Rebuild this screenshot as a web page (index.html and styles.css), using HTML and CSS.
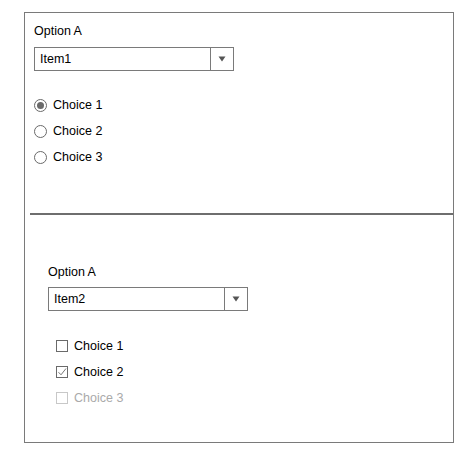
FILE: index.html
```html
<!DOCTYPE html>
<html>
<head>
<meta charset="utf-8">
<link rel="stylesheet" href="styles.css">
</head>
<body>
<div class="panel">
  <div class="section top">
    <div class="label">Option A</div>
    <div class="select">
      <span class="value">Item1</span>
      <span class="arrow"><svg width="8" height="6" viewBox="0 0 8 6"><path d="M0.5 0.5 L7.5 0.5 L4 5.5 Z" fill="#555"/></svg></span>
    </div>
    <div class="choices">
      <div class="row"><span class="radio checked"></span><span>Choice 1</span></div>
      <div class="row"><span class="radio"></span><span>Choice 2</span></div>
      <div class="row"><span class="radio"></span><span>Choice 3</span></div>
    </div>
  </div>
  <div class="divider"></div>
  <div class="section bottom">
    <div class="label">Option A</div>
    <div class="select">
      <span class="value">Item2</span>
      <span class="arrow"><svg width="8" height="6" viewBox="0 0 8 6"><path d="M0.5 0.5 L7.5 0.5 L4 5.5 Z" fill="#555"/></svg></span>
    </div>
    <div class="choices checks">
      <div class="row"><span class="box"></span><span>Choice 1</span></div>
      <div class="row"><span class="box"><svg width="12" height="12" viewBox="0 0 12 12"><path d="M2.5 6.2 L5 8.8 L10 2.5" fill="none" stroke="#777" stroke-width="1"/></svg></span><span>Choice 2</span></div>
      <div class="row disabled"><span class="box"></span><span>Choice 3</span></div>
    </div>
  </div>
</div>
</body>
</html>
```
FILE: styles.css
```css
html, body {
  margin: 0;
  padding: 0;
  background: #fff;
}
body {
  font-family: "Liberation Sans", Arial, sans-serif;
  font-size: 12.5px;
  line-height: 14px;
  color: #000;
}
.panel {
  box-sizing: border-box;
  width: 430px;
  margin: 12px 0 0 24px;
  border: 1px solid #7a7a7a;
}
.section.top {
  padding: 11px 9px 43px 9px;
}
.section.bottom {
  padding: 50px 9px 31px 23px;
}
.label {
  height: 14px;
}
.select {
  box-sizing: border-box;
  width: 200px;
  height: 24px;
  margin-top: 9px;
  border: 1px solid #7a7a7a;
  display: flex;
  align-items: stretch;
}
.section.bottom .select {
  margin-top: 8px;
}
.value {
  flex: 1;
  display: flex;
  align-items: center;
  padding-left: 5px;
}
.arrow {
  width: 22px;
  border-left: 1px solid #7a7a7a;
  display: flex;
  align-items: center;
  justify-content: center;
}
.arrow svg {
  display: block;
}
.choices {
  margin-top: 21px;
  display: flex;
  flex-direction: column;
}
.choices.checks {
  margin-top: 22px;
  padding-left: 8px;
}
.row {
  height: 26px;
  display: flex;
  align-items: center;
  gap: 6px;
}
.radio {
  box-sizing: border-box;
  width: 13px;
  height: 13px;
  border: 1px solid #6a6a6a;
  border-radius: 50%;
  display: flex;
  align-items: center;
  justify-content: center;
}
.radio.checked::after {
  content: "";
  width: 7px;
  height: 7px;
  border-radius: 50%;
  background: #6a6a6a;
}
.box {
  box-sizing: border-box;
  width: 12px;
  height: 12px;
  border: 1px solid #6a6a6a;
  position: relative;
}
.box svg {
  position: absolute;
  left: -1px;
  top: -1px;
}
.row.disabled {
  color: #aaa;
}
.row.disabled .box {
  border-color: #c8c8c8;
}
.divider {
  height: 2px;
  margin-left: 5px;
  background: #6e6e6e;
}
```
